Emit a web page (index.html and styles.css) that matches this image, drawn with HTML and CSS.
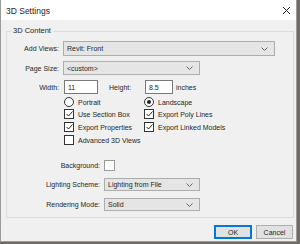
FILE: index.html
```html
<!DOCTYPE html>
<html lang="en">
<head>
  <meta charset="UTF-8">
  <meta name="viewport" content="width=device-width, initial-scale=1.0">
  <title>3D Settings</title>
  <link rel="stylesheet" href="styles.css">
</head>
<body>
  <div class="window">
    <div class="titlebar">
      <span class="title">3D Settings</span>
      <svg class="close" width="9" height="9" viewBox="0 0 9 9"><path d="M1 1 L8 8 M8 1 L1 8" stroke="#222" stroke-width="1" fill="none"/></svg>
    </div>

    <fieldset class="group">
      <legend>3D Content</legend>

      <div class="row r-views">
        <label class="lbl">Add Views:</label>
        <div class="combo w-views">Revit: Front<svg class="arrow" width="7" height="4" viewBox="0 0 7 4"><path d="M0.5 0.5 L3.5 3.5 L6.5 0.5" stroke="#666" fill="none"/></svg></div>
      </div>

      <div class="row r-page">
        <label class="lbl">Page Size:</label>
        <div class="combo w-page">&lt;custom&gt;<svg class="arrow" width="7" height="4" viewBox="0 0 7 4"><path d="M0.5 0.5 L3.5 3.5 L6.5 0.5" stroke="#666" fill="none"/></svg></div>
      </div>

      <div class="row r-size">
        <label class="lbl">Width:</label>
        <div class="field w-width">11</div>
        <label class="lbl-h">Height:</label>
        <div class="field w-height">8.5</div>
        <span class="unit">inches</span>
      </div>

      <div class="options">
        <div class="opt"><span class="radio"></span>Portrait</div>
        <div class="opt"><span class="radio on"></span>Landscape</div>
        <div class="opt"><span class="check on"><svg width="7" height="6" viewBox="0 0 7 6"><path d="M0.5 3 L2.5 5 L6.5 0.5" stroke="#222" fill="none"/></svg></span>Use Section Box</div>
        <div class="opt"><span class="check on"><svg width="7" height="6" viewBox="0 0 7 6"><path d="M0.5 3 L2.5 5 L6.5 0.5" stroke="#222" fill="none"/></svg></span>Export Poly Lines</div>
        <div class="opt"><span class="check on"><svg width="7" height="6" viewBox="0 0 7 6"><path d="M0.5 3 L2.5 5 L6.5 0.5" stroke="#222" fill="none"/></svg></span>Export Properties</div>
        <div class="opt"><span class="check on"><svg width="7" height="6" viewBox="0 0 7 6"><path d="M0.5 3 L2.5 5 L6.5 0.5" stroke="#222" fill="none"/></svg></span>Export Linked Models</div>
        <div class="opt"><span class="check"></span>Advanced 3D Views</div>
      </div>

      <div class="row r-bg">
        <label class="lbl lbl-wide">Background:</label>
        <span class="swatch"></span>
      </div>

      <div class="row r-light">
        <label class="lbl lbl-wide">Lighting Scheme:</label>
        <div class="combo w-light">Lighting from File<svg class="arrow" width="7" height="4" viewBox="0 0 7 4"><path d="M0.5 0.5 L3.5 3.5 L6.5 0.5" stroke="#666" fill="none"/></svg></div>
      </div>

      <div class="row r-render">
        <label class="lbl lbl-wide">Rendering Mode:</label>
        <div class="combo w-light">Solid<svg class="arrow" width="7" height="4" viewBox="0 0 7 4"><path d="M0.5 0.5 L3.5 3.5 L6.5 0.5" stroke="#666" fill="none"/></svg></div>
      </div>
    </fieldset>

    <div class="buttons">
      <button class="btn default">OK</button>
      <button class="btn">Cancel</button>
    </div>
  </div>
</body>
</html>
```

FILE: styles.css
```css
body {
  margin: 0;
  width: 300px;
  height: 244px;
  background: #6f6b67;
  font-family: "Liberation Sans", Arial, sans-serif;
  font-size: 7px;
  color: #262626;
  overflow: hidden;
}
.window {
  width: 295px;
  height: 241px;
  background: #f0f0f0;
  border: 1px solid #9a9a9a;
  border-top: none;
}
.titlebar {
  height: 20px;
  background: #fff;
  display: flex;
  align-items: center;
  justify-content: space-between;
  padding: 0 4px 0 5px;
}
.title {
  font-size: 8.5px;
  margin-top: 1px;
}
.close {
  margin-right: 1px;
}
.group {
  margin: 6px 0 0 5px;
  width: 286px;
  padding: 0 0 6px 0;
  border: 1px solid #dcdcdc;
  box-sizing: content-box;
}
.group legend {
  margin-left: 4px;
  padding: 0 2px;
  line-height: 10px;
  height: 10px;
  font-size: 7.5px;
}
.row {
  display: flex;
  align-items: center;
  white-space: nowrap;
}
.lbl {
  width: 52px;
  text-align: right;
  margin-right: 4px;
}
.lbl-wide {
  width: 93px;
}
.combo {
  height: 14px;
  box-sizing: border-box;
  background: #e5e5e5;
  border: 1px solid #adadad;
  display: flex;
  align-items: center;
  justify-content: space-between;
  padding: 0 6px 0 3px;
}
.r-views { margin-top: 5px; }
.r-views .combo { height: 15px; }
.w-views { width: 212px; }
.r-page { margin-top: 5px; }
.w-page { width: 137px; }
.r-size { margin-top: 5px; }
.field {
  height: 14px;
  box-sizing: border-box;
  background: #fff;
  border: 1px solid #7a7a7a;
  display: flex;
  align-items: center;
  padding-left: 3px;
}
.w-width { width: 34px; margin-left: 1px; }
.lbl-h { margin-left: 11px; width: 32px; margin-right: 4px; }
.w-height { width: 28px; }
.unit { margin-left: 3px; }
.options {
  display: grid;
  grid-template-columns: 80px 120px;
  grid-template-rows: 12px 12px 14px 12px;
  margin: 2px 0 0 57px;
  white-space: nowrap;
}
.opt {
  display: flex;
  align-items: center;
}
.radio {
  width: 8px;
  height: 8px;
  border: 1px solid #333;
  border-radius: 50%;
  background: #fff;
  margin-right: 4px;
  display: flex;
  align-items: center;
  justify-content: center;
}
.radio.on::after {
  content: "";
  width: 4px;
  height: 4px;
  border-radius: 50%;
  background: #222;
}
.check {
  width: 8px;
  height: 8px;
  border: 1px solid #333;
  background: #fff;
  margin-right: 4px;
  display: flex;
  align-items: center;
  justify-content: center;
}
.r-bg { margin-top: 14px; }
.swatch {
  width: 9px;
  height: 9px;
  border: 1px solid #999;
  background: #fff;
}
.r-light { margin-top: 7px; }
.r-light .combo, .r-render .combo { height: 13px; }
.w-light { width: 96px; }
.r-render { margin-top: 7px; }
.buttons {
  display: flex;
  justify-content: flex-end;
  gap: 4px;
  margin: 7px 3px 0 0;
}
.btn {
  font-family: inherit;
  font-size: 7px;
  height: 14px;
  padding: 0;
  background: #e1e1e1;
  border: 1px solid #adadad;
  color: #262626;
  width: 37px;
}
.btn.default {
  width: 38px;
  border: 1px solid #0078d7;
  box-shadow: inset 0 0 0 1px #0078d7;
}
```
